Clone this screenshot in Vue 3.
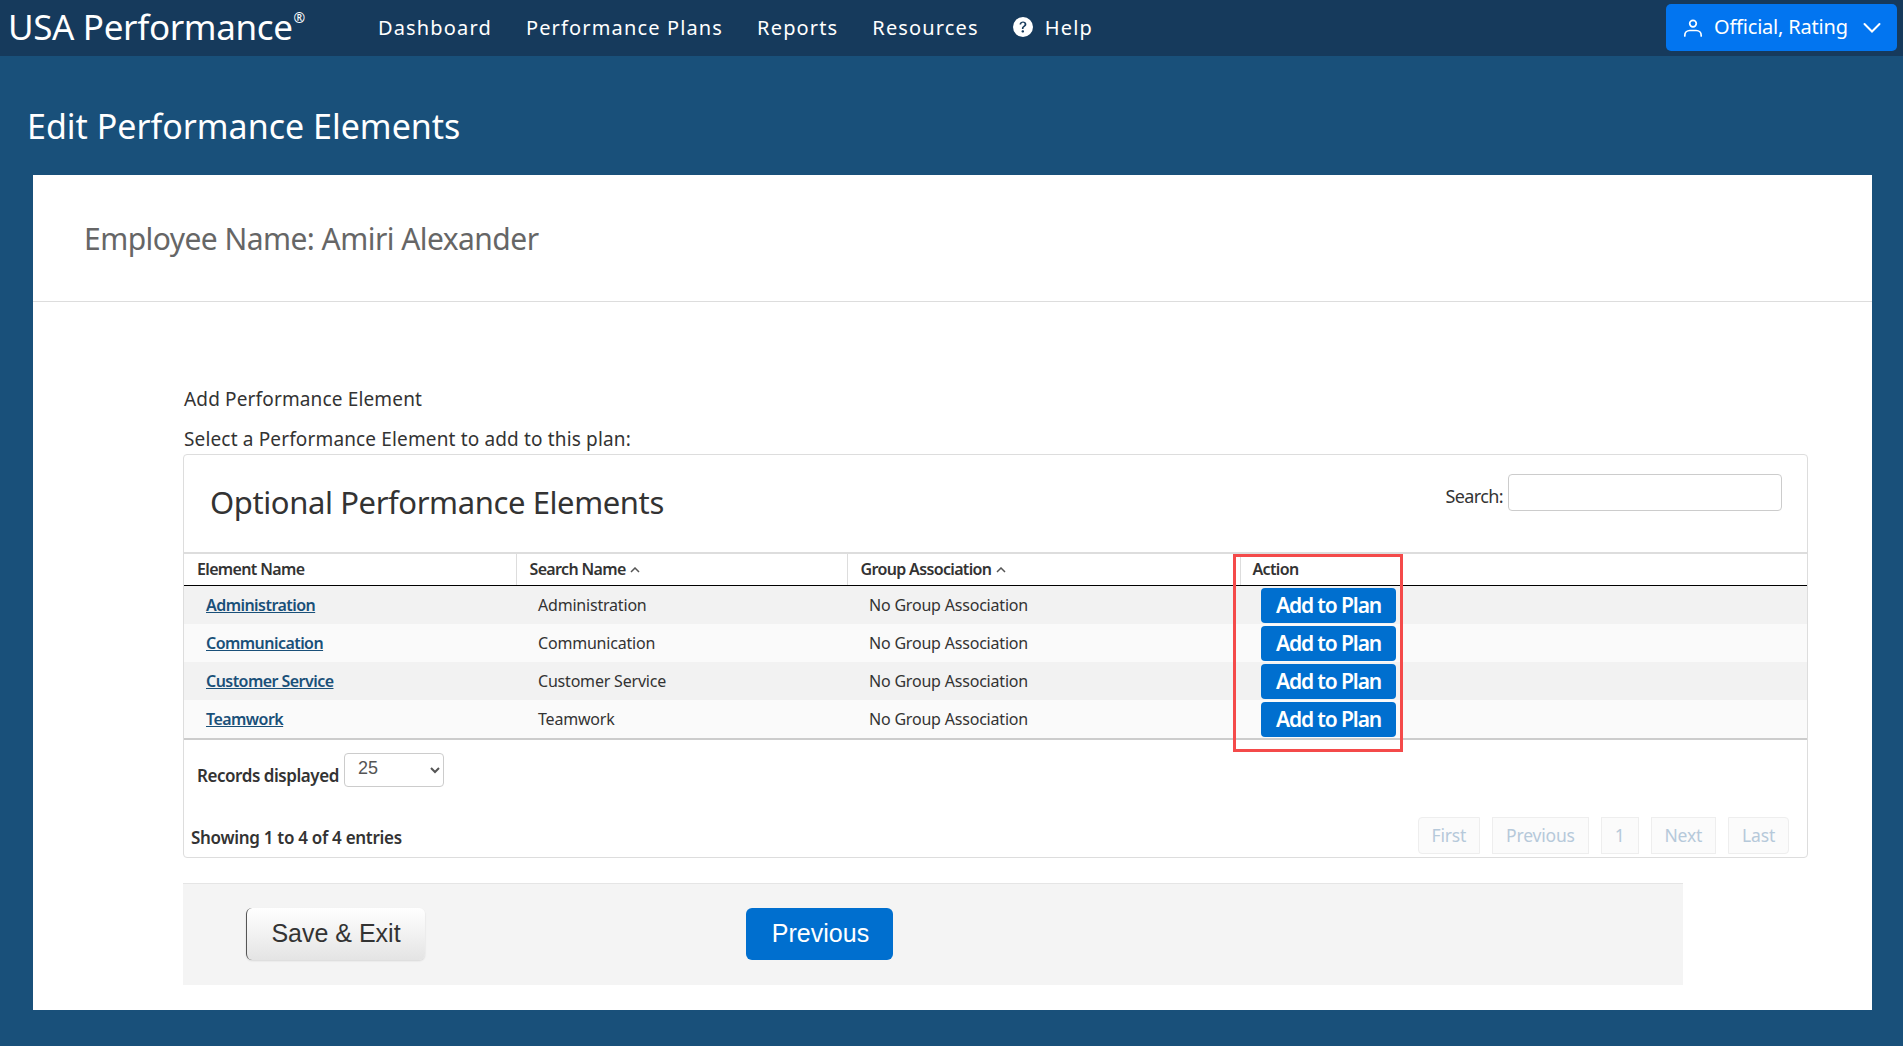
<template>
  <div class="page">
    <header class="topbar">
      <div class="brand">USA Performance<sup>®</sup></div>
      <nav class="nav">
        <a v-for="item in navItems" :key="item" class="nav-link">{{ item }}</a>
        <a class="nav-link help">
          <svg width="20" height="20" viewBox="0 0 16 16" fill="#fff">
            <path d="M16 8A8 8 0 1 1 0 8a8 8 0 0 1 16 0zM5.496 6.033h.825c.138 0 .248-.113.266-.25.09-.656.54-1.134 1.342-1.134.686 0 1.314.343 1.314 1.168 0 .635-.374.927-.965 1.371-.673.489-1.206 1.06-1.168 1.987l.003.217a.25.25 0 0 0 .25.246h.811a.25.25 0 0 0 .25-.25v-.105c0-.718.273-.927 1.01-1.486.609-.463 1.244-.977 1.244-2.056 0-1.511-1.276-2.241-2.673-2.241-1.267 0-2.655.59-2.75 2.286a.237.237 0 0 0 .241.247zm2.325 6.443c.61 0 1.029-.394 1.029-.927 0-.552-.42-.94-1.029-.94-.584 0-1.009.388-1.009.94 0 .533.425.927 1.01.927z" />
          </svg>
          Help
        </a>
      </nav>
      <button class="user-btn">
        <svg width="20" height="20" viewBox="0 0 20 20" fill="none" stroke="#fff" stroke-width="1.7" stroke-linecap="round">
          <circle cx="10" cy="5.6" r="3.3" />
          <path d="M1.8 18v-.6c0-3 2.2-4.9 5-4.9h6.4c2.8 0 5 1.9 5 4.9v.6" />
        </svg>
        <span>Official, Rating</span>
        <svg width="18" height="12" viewBox="0 0 18 12" fill="none" stroke="#fff" stroke-width="2" stroke-linecap="round">
          <path d="M1.5 2l7.5 7.5L16.5 2" />
        </svg>
      </button>
    </header>

    <h1 class="page-title">Edit Performance Elements</h1>

    <main class="card">
      <div class="card-head">Employee Name: Amiri Alexander</div>
      <div class="card-body">
        <p class="add-title">Add Performance Element</p>
        <p class="add-hint">Select a Performance Element to add to this plan:</p>

        <section class="panel">
          <div class="panel-top">
            <h2>Optional Performance Elements</h2>
            <label class="search"><span>Search:</span> <input type="text" /></label>
          </div>

          <table class="grid">
            <thead>
              <tr>
                <th class="col-name">Element Name</th>
                <th class="col-search">
                  Search Name
                  <svg class="caret" width="10" height="6" viewBox="0 0 10 6"><path d="M1 5l4-4 4 4" /></svg>
                </th>
                <th class="col-group">
                  Group Association
                  <svg class="caret" width="10" height="6" viewBox="0 0 10 6"><path d="M1 5l4-4 4 4" /></svg>
                </th>
                <th>Action</th>
              </tr>
            </thead>
            <tbody>
              <tr v-for="row in rows" :key="row">
                <td class="cell-name"><a>{{ row }}</a></td>
                <td class="cell-plain">{{ row }}</td>
                <td class="cell-plain group">No Group Association</td>
                <td class="cell-action"><button class="add-btn">Add to Plan</button></td>
              </tr>
            </tbody>
          </table>

          <div class="records">
            <span>Records displayed</span>
            <select><option>25</option></select>
          </div>

          <div class="panel-foot">
            <span class="showing">Showing 1 to 4 of 4 entries</span>
            <div class="pager">
              <span v-for="p in pages" :key="p" class="page-btn">{{ p }}</span>
            </div>
          </div>

          <div class="highlight"></div>
        </section>

        <div class="actions">
          <button class="btn-save">Save &amp; Exit</button>
          <button class="btn-prev">Previous</button>
        </div>
      </div>
    </main>
  </div>
</template>

<script setup>
const navItems = ["Dashboard", "Performance Plans", "Reports", "Resources"];
const rows = ["Administration", "Communication", "Customer Service", "Teamwork"];
const pages = ["First", "Previous", "1", "Next", "Last"];
</script>

<style>
html,
body {
  margin: 0;
  background: #19507a;
}
</style>

<style scoped>
.page {
  min-height: 1046px;
  background: #19507a;
  font-family: "Noto Sans", "Open Sans", sans-serif;
  color: #333;
  overflow: hidden;
}

.topbar {
  height: 56px;
  background: #163a5c;
  display: flex;
  align-items: center;
  color: #fff;
  box-sizing: border-box;
  padding: 0 6px 2px 8px;
}
.brand {
  width: 370px;
  font-size: 35px;
  letter-spacing: -0.35px;
  line-height: 54px;
  white-space: nowrap;
}
.brand sup {
  font-size: 14px;
  line-height: 0;
  vertical-align: 17px;
  margin-left: 1px;
}
.nav {
  display: flex;
  align-items: center;
  gap: 34px;
  flex: 1;
}
.nav-link {
  font-size: 20px;
  letter-spacing: 1.15px;
  white-space: nowrap;
}
.help {
  display: flex;
  align-items: center;
  gap: 12px;
}
.user-btn {
  width: 231px;
  height: 47px;
  margin-top: 1px;
  background: #0275f0;
  border: none;
  border-radius: 5px;
  color: #fff;
  font: inherit;
  font-size: 20px;
  letter-spacing: -0.2px;
  display: flex;
  align-items: center;
  padding: 0 16px 0 17px;
  gap: 11px;
}
.user-btn span {
  flex: 1;
  text-align: left;
  white-space: nowrap;
  padding-bottom: 2px;
}

.page-title {
  margin: 0;
  height: 119px;
  box-sizing: border-box;
  padding: 47px 0 0 27px;
  font-size: 34px;
  line-height: 46px;
  font-weight: 400;
  letter-spacing: 0;
  color: #fff;
}

.card {
  margin: 0 31px 0 33px;
  height: 835px;
  background: #fff;
}
.card-head {
  height: 127px;
  box-sizing: border-box;
  padding: 44px 0 0 51px;
  font-size: 30px;
  line-height: 40px;
  letter-spacing: -0.55px;
  color: #666;
  border-bottom: 1px solid #ddd;
}
.card-body {
  padding: 84px 64px 0 150px;
}
.add-title,
.add-hint {
  margin: 0 0 0 1px;
  font-size: 19px;
  line-height: 26px;
  letter-spacing: 0.15px;
  color: #333;
}
.add-hint {
  margin-top: 14px;
  height: 28px;
}

.panel {
  position: relative;
  height: 404px;
  box-sizing: border-box;
  border: 1px solid #ddd;
  border-radius: 4px;
  background: #fff;
}
.panel-top {
  height: 97px;
  display: flex;
  justify-content: space-between;
  box-sizing: border-box;
  padding: 0 25px 0 26px;
}
.panel-top h2 {
  margin: 26px 0 0;
  font-size: 31px;
  line-height: 42px;
  font-weight: 400;
  letter-spacing: -0.4px;
  color: #333;
}
.search {
  display: flex;
  align-items: center;
  gap: 5px;
  height: 37px;
  margin-top: 19px;
  font-size: 18px;
  letter-spacing: -0.6px;
}
.search span {
  padding-top: 7px;
}
.search input {
  width: 274px;
  height: 37px;
  box-sizing: border-box;
  border: 1px solid #ccc;
  border-radius: 4px;
  background: #fff;
}

.grid {
  width: 100%;
  table-layout: fixed;
  border-collapse: collapse;
  border-top: 2px solid #ddd;
  border-bottom: 2px solid #ccc;
}
.grid th {
  height: 32px;
  box-sizing: border-box;
  padding: 0 0 0 13px;
  text-align: left;
  font-size: 16px;
  font-weight: 600;
  letter-spacing: -0.65px;
  color: #333;
  border-bottom: 1.5px solid #000;
  border-right: 1px solid #ddd;
  white-space: nowrap;
}
.grid th:last-child {
  border-right: none;
  padding-left: 12px;
}
.col-name {
  width: 332px;
}
.col-search {
  width: 331px;
}
.col-group {
  width: 393px;
}
.caret {
  fill: none;
  stroke: #555;
  stroke-width: 1.5;
  margin-left: 1px;
  vertical-align: 2px;
}
.grid td {
  height: 38px;
  padding: 0;
  font-size: 16px;
  letter-spacing: -0.2px;
}
.grid tbody tr:nth-child(odd) {
  background: #f2f2f2;
}
.grid tbody tr:nth-child(even) {
  background: #fafafa;
}
.cell-name {
  padding-left: 22px !important;
}
.cell-name a {
  color: #1a5079;
  font-weight: 600;
  letter-spacing: -0.55px;
  text-decoration: underline;
}
.cell-plain {
  padding-left: 22px !important;
  color: #333;
}
.group {
  padding-left: 22px !important;
}
.cell-action {
  padding-left: 21px !important;
}
.add-btn {
  display: block;
  width: 135px;
  height: 35px;
  margin-top: 1px;
  background: #006fcf;
  border: none;
  border-radius: 4px;
  color: #fff;
  font: inherit;
  font-size: 21px;
  font-weight: 600;
  letter-spacing: -1.1px;
  padding: 0;
}

.records {
  display: flex;
  align-items: flex-start;
  gap: 5px;
  height: 47px;
  padding: 13px 0 0 13px;
  box-sizing: border-box;
  font-size: 17px;
  font-weight: 600;
  letter-spacing: -0.45px;
}
.records span {
  margin-top: 11px;
  line-height: 24px;
}
.records select {
  width: 100px;
  height: 34px;
  box-sizing: border-box;
  border: 1px solid #ccc;
  border-radius: 4px;
  background: #fff;
  color: #555;
  font-family: "Liberation Sans", sans-serif;
  font-size: 18px;
  letter-spacing: 0;
  padding: 0 0 3px 9px;
}
.panel-foot {
  display: flex;
  justify-content: space-between;
  align-items: flex-start;
  padding: 30px 18px 0 6px;
}
.showing {
  font-size: 17px;
  font-weight: 600;
  letter-spacing: -0.3px;
  line-height: 24px;
  margin-top: 9px;
  margin-left: 1px;
}
.pager {
  display: flex;
  gap: 12px;
}
.page-btn {
  height: 37px;
  box-sizing: border-box;
  padding: 0 13px;
  display: flex;
  align-items: center;
  border: 1px solid #eee;
  background: #fbfbfb;
  color: #b6c9da;
  font-size: 17.5px;
  letter-spacing: -0.2px;
}
.page-btn:first-child {
  border-radius: 4px 0 0 4px;
}
.page-btn:last-child {
  border-radius: 0 4px 4px 0;
}

.highlight {
  position: absolute;
  left: 1049px;
  top: 99px;
  width: 170px;
  height: 198px;
  box-sizing: border-box;
  border: 3px solid #f44a4a;
  pointer-events: none;
}

.actions {
  width: 1500px;
  height: 102px;
  box-sizing: border-box;
  margin-top: 25px;
  padding: 24px 0 0 63px;
  background: #f4f4f4;
  border-top: 1px solid #e5e5e5;
  display: flex;
  align-items: flex-start;
  gap: 321px;
}
.actions button {
  height: 52px;
  font-family: "Liberation Sans", sans-serif;
  font-size: 25px;
  border-radius: 6px;
  padding: 0 0 2px;
}
.btn-save {
  width: 179px;
  color: #333;
  background: linear-gradient(#fff, #e4e4e4);
  border: none;
  border-left: 1.5px solid #555;
  box-shadow: 0 1px 2px rgba(0, 0, 0, 0.12);
}
.btn-prev {
  width: 147px;
  color: #fff;
  background: #006fcf;
  border: none;
  padding-left: 2px !important;
}
</style>
